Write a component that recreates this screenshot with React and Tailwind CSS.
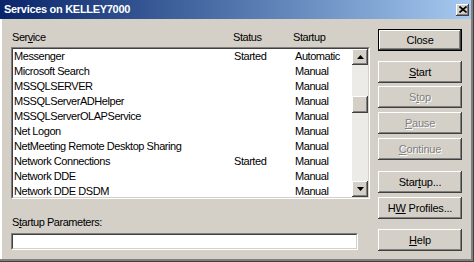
import React from 'react'

const services = [
  ['Messenger', 'Started', 'Automatic'],
  ['Microsoft Search', '', 'Manual'],
  ['MSSQLSERVER', '', 'Manual'],
  ['MSSQLServerADHelper', '', 'Manual'],
  ['MSSQLServerOLAPService', '', 'Manual'],
  ['Net Logon', '', 'Manual'],
  ['NetMeeting Remote Desktop Sharing', '', 'Manual'],
  ['Network Connections', 'Started', 'Manual'],
  ['Network DDE', '', 'Manual'],
  ['Network DDE DSDM', '', 'Manual'],
]

const raised =
  'shadow-[inset_-1px_-1px_#404040,inset_1px_1px_#ffffff,inset_-2px_-2px_#808080,inset_2px_2px_#d4d0c8]'

function Sunken({ className, children }) {
  return (
    <div className={'border border-t-[#808080] border-l-[#808080] border-b-white border-r-white ' + className}>
      <div className="h-full w-full border border-t-[#404040] border-l-[#404040] border-b-[#d4d0c8] border-r-[#d4d0c8] bg-white">
        {children}
      </div>
    </div>
  )
}

function Btn({ children, disabled, isDefault, className = '' }) {
  return (
    <div
      className={
        'flex h-[22px] w-[84px] items-center justify-center bg-[#d4d0c8] tracking-[-0.2px] ' +
        (isDefault ? 'border border-black ' : '') +
        raised +
        ' ' +
        (disabled ? 'text-[#808080] [text-shadow:1px_1px_0_#ffffff] ' : 'text-black ') +
        className
      }
    >
      {children}
    </div>
  )
}

function Arrow({ down }) {
  return (
    <div className={'flex h-[16px] w-[16px] items-center justify-center bg-[#d4d0c8] ' + raised}>
      <svg width="7" height="4" viewBox="0 0 7 4">
        {down ? <path d="M0 0h7L3.5 4z" fill="#000" /> : <path d="M0 4h7L3.5 0z" fill="#000" />}
      </svg>
    </div>
  )
}

export default function App() {
  return (
    <div className="relative flex h-[262px] w-[474px] flex-col overflow-hidden bg-[#d4d0c8] font-['Liberation_Sans',Arial,sans-serif] text-[11px] leading-[13px] tracking-[-0.45px] text-black shadow-[inset_-1px_-1px_#404040,inset_-3px_-3px_#808080,inset_2px_0_#ffffff]">
      {/* title bar */}
      <div className="mr-[3px] flex h-[19px] shrink-0 items-center justify-between bg-gradient-to-r from-[#0a246a] to-[#a6caf0] pl-[4px] pr-[2px]">
        <span className="font-bold tracking-[-0.3px] text-white">Services on KELLEY7000</span>
        <div className={'flex h-[12px] w-[13px] items-center justify-center bg-[#d4d0c8] ' + raised}>
          <svg width="8" height="7" viewBox="0 0 8 7">
            <path d="M0.5 0.5l7 6M7.5 0.5l-7 6" stroke="#000" strokeWidth="1.6" />
          </svg>
        </div>
      </div>

      <div className="flex pt-[10px]">
        {/* left column */}
        <div className="ml-[11px] flex w-[359px] flex-col pt-[2px]">
          <div className="flex h-[13px] pl-[1px]">
            <span className="w-[221px]">
              Ser<u>v</u>ice
            </span>
            <span className="w-[60px]">Status</span>
            <span>Startup</span>
          </div>
          <Sunken className="mt-[3px] h-[152px]">
            <div className="flex h-full">
              <div className="flex-1 overflow-hidden pl-[1px] leading-[15px]">
                {services.map(([name, status, startup]) => (
                  <div key={name} className="flex h-[15px] whitespace-nowrap">
                    <span className="w-[220px]">{name}</span>
                    <span className="w-[61px]">{status}</span>
                    <span>{startup}</span>
                  </div>
                ))}
              </div>
              <div className="flex w-[16px] flex-col bg-[#ecebe7]">
                <Arrow />
                <div className="flex-1 pt-[31px]">
                  <div className={'h-[17px] w-[16px] bg-[#d4d0c8] ' + raised} />
                </div>
                <Arrow down />
              </div>
            </div>
          </Sunken>
          <div className="mt-[17px] pl-[1px]">
            S<u>t</u>artup Parameters:
          </div>
          <Sunken className="mt-[4px] h-[17px] w-[347px]" />
        </div>

        {/* buttons */}
        <div className="ml-[8px] flex flex-col">
          <Btn isDefault>Close</Btn>
          <Btn className="mt-[10px]">
            <u>S</u>tart
          </Btn>
          <Btn disabled className="mt-[3px]">
            S<u>t</u>op
          </Btn>
          <Btn disabled className="mt-[4px]">
            <u>P</u>ause
          </Btn>
          <Btn disabled className="mt-[4px]">
            <u>C</u>ontinue
          </Btn>
          <Btn className="mt-[11px]">
            Star<u>t</u>up...
          </Btn>
          <Btn className="mt-[4px]">
            <span>
              H<u>W</u>&nbsp;Profiles...
            </span>
          </Btn>
          <Btn className="mt-[10px]">
            <u>H</u>elp
          </Btn>
        </div>
      </div>
    </div>
  )
}
